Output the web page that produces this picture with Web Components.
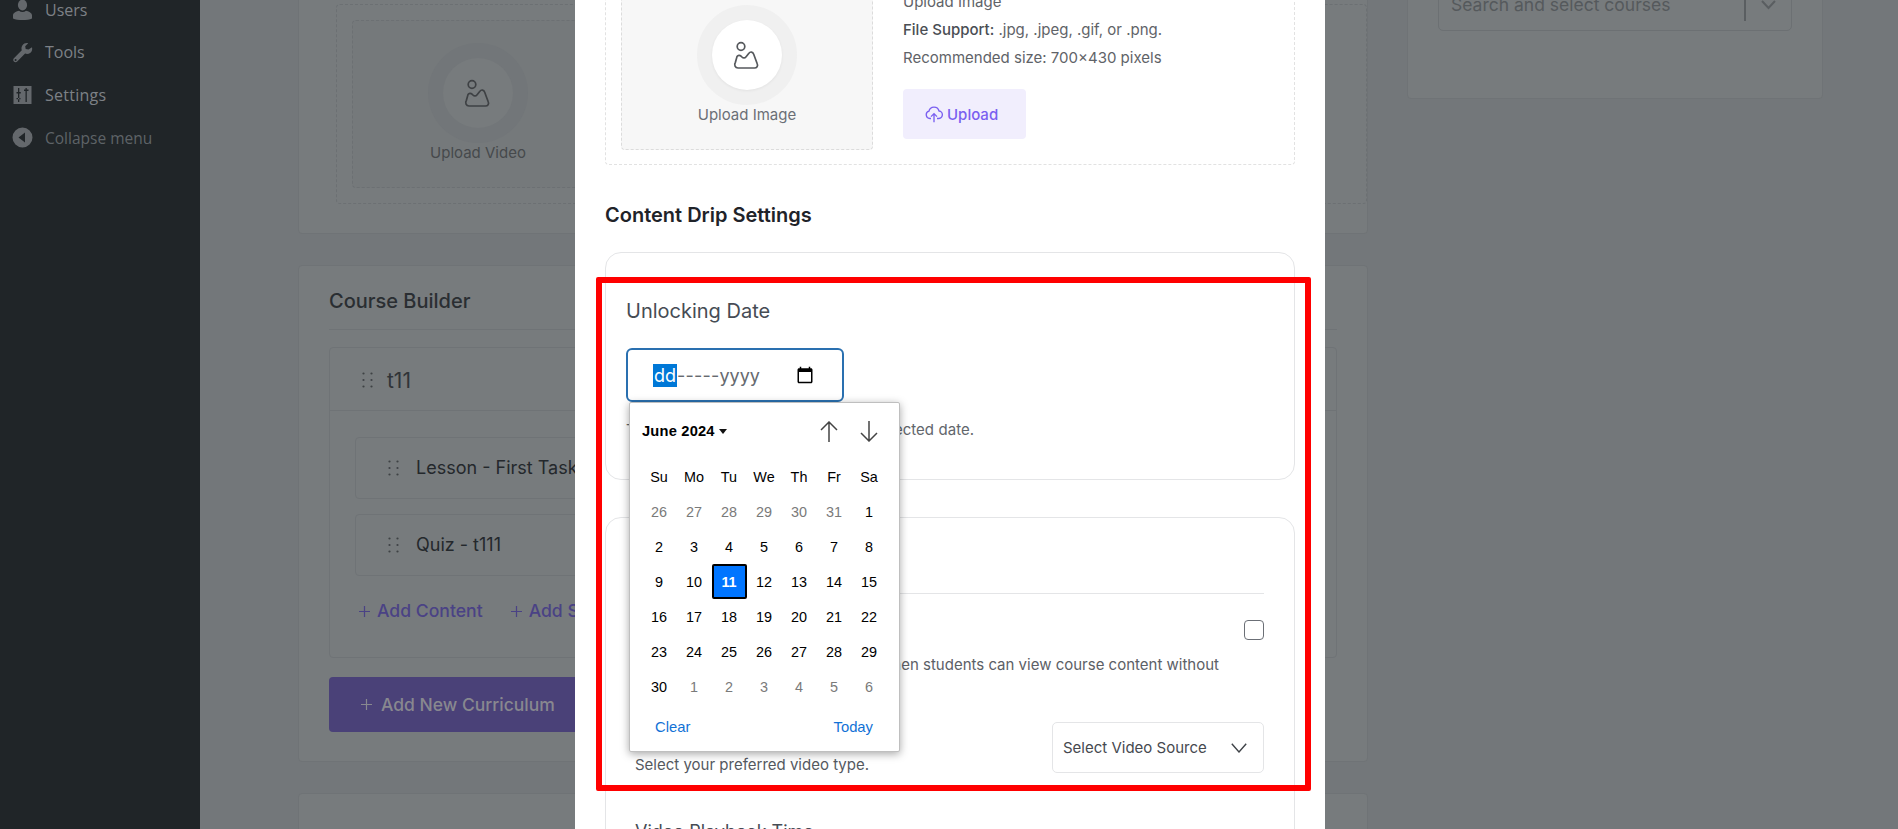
<!DOCTYPE html>
<html lang="en">
<head>
<meta charset="utf-8">
<title>Content Drip Settings</title>
<style>
  html, body { margin: 0; height: 829px; overflow: hidden; background: #73777a; }
  body { font-family: Inter, "Liberation Sans", sans-serif; }
</style>
</head>
<body>
<lms-page></lms-page>

<script>
//small helper so every element gets an open shadow root from a template
function makeTemplate(html) {
  var t = document.createElement("template");
  t.innerHTML = html;
  return t;
}

var GRIP = `<svg width="11" height="16" viewBox="0 0 11 16" fill="currentColor" aria-hidden="true">
  <circle cx="1.5" cy="1.5" r="1.1"/><circle cx="9.5" cy="1.5" r="1.1"/>
  <circle cx="1.5" cy="8" r="1.1"/><circle cx="9.5" cy="8" r="1.1"/>
  <circle cx="1.5" cy="14.5" r="1.1"/><circle cx="9.5" cy="14.5" r="1.1"/></svg>`;

var PLUS = `<svg width="11" height="11" viewBox="0 0 11 11" stroke="currentColor" stroke-width="1.2" fill="none" aria-hidden="true"><path d="M5.5 0v11M0 5.5h11"/></svg>`;

//-------- admin sidebar
var template_menu = makeTemplate(`
<style>
  :host { display: block; width: 200px; height: 829px; background: #202528; overflow: hidden; flex: none; font-family: "Open Sans", "Liberation Sans", sans-serif; }
  .list { margin-top: -11.500px; display: flex; flex-direction: column; }
  .item { height: 42.500px; display: flex; align-items: center; padding-left: 12px; gap: 12px; color: #7d8186; font-size: 16px; }
  .item svg { width: 21px; height: 21px; flex: none; fill: #64686c; }
  .item.collapse { color: #5e6367; font-size: 15.500px; margin-top: .5px; }
</style>
<div class="list">
  <div class="item"><svg viewBox="0 0 21 21"><ellipse cx="10.5" cy="6" rx="4.6" ry="5.4"/><path d="M1 19.5v-3.2c0-2.6 3.6-4 6-4.6 2 1.7 5 1.7 7 0 2.4.6 6 2 6 4.6v3.2c-2 1-5.800 1.500-9.500 1.500S3 20.500 1 19.500z"/></svg><span>Users</span></div>
  <div class="item"><svg viewBox="0 0 21 21"><path d="M20 5.200c.6 2.300-.1 4.500-1.900 5.800-1.500 1.100-3.400 1.300-5 .6L5.200 19.600c-.9.900-2.400.9-3.300 0s-.9-2.400 0-3.300l7.900-8c-.6-1.700-.4-3.600.7-5C11.800 1.400 14 .6 16.200 1.200l-3 3.100.5 2.800 2.800.5 3.500-2.400zM3.600 16.900a1 1 0 1 0 0 2 1 1 0 0 0 0-2z"/></svg><span>Tools</span></div>
  <div class="item"><svg viewBox="0 0 21 21"><path fill-rule="evenodd" d="M1.500 2h18v18h-18zM6 4v4H4.500v1.500H6V18h1.300V9.500h1.500V8H7.300V4zm7.500 0v1.500H12V7h1.500v11h1.300V7h1.700V5.500h-1.700V4zM4.500 14h4v1.300h-4z"/></svg><span style="letter-spacing:.25px">Settings</span></div>
  <div class="item collapse"><svg viewBox="0 0 21 21"><path fill-rule="evenodd" d="M10.500.5a10 10 0 1 1 0 20 10 10 0 0 1 0-20zM13 5.500l-6.500 5 6.500 5z"/></svg><span>Collapse menu</span></div>
</div>
`);

class LmsMenu extends HTMLElement {
  constructor() {
    super();
    this.attachShadow({ mode: "open" });
  }
  connectedCallback() {
    this.shadowRoot.appendChild(template_menu.content.cloneNode(true));
  }
}
customElements.define("lms-menu", LmsMenu);

//-------- dashed drop zone with the round picture icon (dimmed behind the modal, white inside it)
var template_drop = makeTemplate(`
<style>
  :host { display: block; flex: none; width: 252px; height: 168px; box-sizing: border-box; border: 1px dashed var(--drop-line, #dcdcdc); border-radius: 4px; background: var(--drop-bg, #f7f7f7); padding-top: 22px; text-align: center; font-size: 15px; line-height: 20px; color: var(--drop-text, #6b6f76); }
  .ring { width: 100px; height: 100px; margin: 0 auto; border-radius: 50%; background: var(--drop-ring, #f0f0f0); display: flex; align-items: center; justify-content: center; }
  .disc { width: 70px; height: 70px; border-radius: 50%; background: var(--drop-disc, #fff); box-shadow: var(--drop-shadow, 0 1px 3px rgba(0,0,0,.06)); display: flex; align-items: center; justify-content: center; color: var(--drop-icon, #55585c); }
</style>
<div class="ring"><div class="disc">
  <svg width="28" height="28" viewBox="0 0 28 28" fill="none" stroke="currentColor" stroke-width="1.7" aria-hidden="true"><circle cx="8" cy="5.500" r="3.800"/><path d="M5 27h16.500c2.400 0 3.600-2 2.800-4L20.700 13.200c-.9-2.600-3.400-2.900-5-.8l-2.600 3.300c-1.300 1.600-2.900 1.600-4.200.3l-.9-.9c-1.200-1.200-3-1-4 .4L2.400 21.300C.8 24 2.200 27 5 27z"/></svg>
</div></div>
<slot></slot>
`);

class UploadDrop extends HTMLElement {
  constructor() {
    super();
    this.attachShadow({ mode: "open" });
  }
  connectedCallback() {
    this.shadowRoot.appendChild(template_drop.content.cloneNode(true));
  }
}
customElements.define("upload-drop", UploadDrop);

//-------- plain rounded card of the dimmed page
var template_card = makeTemplate(`
<style>
  :host { display: block; box-sizing: border-box; background: #777b7d; border: 1px solid #6f7376; border-radius: 4px; }
</style>
<slot></slot>
`);

class PageCard extends HTMLElement {
  constructor() {
    super();
    this.attachShadow({ mode: "open" });
  }
  connectedCallback() {
    this.shadowRoot.appendChild(template_card.content.cloneNode(true));
  }
}
customElements.define("page-card", PageCard);

//-------- curriculum topic with its lessons, left behind the modal
var template_builder = makeTemplate(`
<style>
  :host { display: block; color: #24282c; }
  h2 { margin: 0; padding-top: 22px; height: 41px; line-height: 26px; font-size: 20px; font-weight: 500; box-sizing: content-box; border-bottom: 1px solid #6f7376; color: #2a2e32; }
  .panel { margin-top: 17px; height: 311px; box-sizing: border-box; border: 1px solid #6f7376; border-radius: 4px; }
  .topic { height: 63px; box-sizing: border-box; border-bottom: 1px solid #6f7376; display: flex; align-items: center; gap: 14px; padding: 2px 0 0 32px; font-size: 21px; color: #303438; }
  .topic svg, .row svg { color: #3f4245; flex: none; }
  .rows { padding: 26px 25px 0 25px; display: flex; flex-direction: column; gap: 15px; }
  .row { height: 62px; box-sizing: border-box; border: 1px solid #6f7376; border-radius: 4px; display: flex; align-items: center; gap: 17px; padding: 0 0 1px 32px; font-size: 18px; white-space: nowrap; }
  .adds { display: flex; gap: 28px; margin: 23px 0 0 29px; color: #4a4285; font-size: 17.600px; line-height: 24px; font-weight: 500; white-space: nowrap; }
  .adds span { display: inline-flex; align-items: center; gap: 7px; }
  .new { margin-top: 19px; height: 55px; width: 420px; border-radius: 4px; background: #4a4178; color: #88888f; display: flex; align-items: center; gap: 9px; padding-left: 32px; box-sizing: border-box; font-size: 17.500px; font-weight: 500; }
</style>
<h2>Course Builder</h2>
<div class="panel">
  <div class="topic">${GRIP}<span>t11</span></div>
  <div class="rows">
    <div class="row">${GRIP}<span>Lesson - First Task</span></div>
    <div class="row">${GRIP}<span>Quiz - t111</span></div>
  </div>
  <div class="adds"><span>${PLUS}Add Content</span><span>${PLUS}Add Section</span></div>
</div>
<div class="new">${PLUS}<span>Add New Curriculum</span></div>
`);

class CourseBuilder extends HTMLElement {
  constructor() {
    super();
    this.attachShadow({ mode: "open" });
  }
  connectedCallback() {
    this.shadowRoot.appendChild(template_builder.content.cloneNode(true));
  }
}
customElements.define("course-builder", CourseBuilder);

//-------- open date input and its calendar popup
var template_date = makeTemplate(`
<style>
  :host { display: block; position: relative; width: 218px; height: 54px; }
  .field { height: 54px; box-sizing: border-box; border: 2px solid #2a70b0; border-radius: 6px; background: #fff; display: flex; align-items: center; padding-left: 25px; font-size: 18px; color: #666a6f; }
  .sel { background: #0078d7; color: #fff; width: 24px; height: 23px; line-height: 23px; text-align: center; }
  .dash { letter-spacing: .2px; }
  .field svg { margin-left: auto; margin-right: 28px; }
  .pop { position: absolute; left: 3px; top: 54px; z-index: 3; width: 271px; height: 350px; box-sizing: border-box; background: #fff; border: 1px solid #bfbfbf; border-radius: 2px; box-shadow: 0 2px 8px rgba(0,0,0,.35); font-family: "Liberation Sans", Arial, sans-serif; font-size: 14.400px; color: #000; }
  .head { height: 56px; display: flex; align-items: center; padding: 0 21px 0 12px; }
  .month { font-weight: 700; font-size: 14.670px; letter-spacing: .2px; }
  .caret { width: 0; height: 0; margin-left: 4px; border: 4.500px solid transparent; border-top: 5px solid #111; border-bottom: 0; }
  .arrows { margin-left: auto; display: flex; gap: 22px; color: #444; }
  .grid { margin-left: 11.500px; display: grid; grid-template-columns: repeat(7, 35px); grid-auto-rows: 35px; }
  .grid span { display: flex; align-items: center; justify-content: center; box-sizing: border-box; }
  .grid .off { color: #7a7a7a; }
  .grid .now { background: #0075ff; border: 2px solid #000; border-radius: 2px; color: #fff; font-weight: 700; }
  .foot { height: 45px; display: flex; align-items: center; justify-content: space-between; padding: 0 26px 0 25px; color: #1272d6; font-size: 14.800px; }
</style>
<div class="field">
  <span class="sel">dd</span><span class="dash">-----</span><span>yyyy</span>
  <svg width="18" height="18" viewBox="0 0 24 24" fill="#000" aria-hidden="true"><path d="M20 3h-1V1h-2v2H7V1H5v2H4c-1.100 0-2 .9-2 2v16c0 1.100.9 2 2 2h16c1.100 0 2-.9 2-2V5c0-1.100-.9-2-2-2zm0 18H4V8h16v13z"/></svg>
</div>
<div class="pop">
  <div class="head">
    <span class="month">June 2024</span><span class="caret"></span>
    <span class="arrows">
      <svg width="18" height="21" viewBox="0 0 18 21" fill="none" stroke="currentColor" stroke-width="1.500" aria-hidden="true"><path d="M9 21V1M1 9l8-8 8 8"/></svg>
      <svg width="18" height="21" viewBox="0 0 18 21" fill="none" stroke="currentColor" stroke-width="1.500" aria-hidden="true"><path d="M9 0v20M1 12l8 8 8-8"/></svg>
    </span>
  </div>
  <div class="grid"></div>
  <div class="foot"><span>Clear</span><span>Today</span></div>
</div>
`);

class DatePicker extends HTMLElement {
  constructor() {
    super();
    this.attachShadow({ mode: "open" });
  }
  connectedCallback() {
    this.shadowRoot.appendChild(template_date.content.cloneNode(true));
    var grid = this.shadowRoot.querySelector(".grid");
    var cells = ["Su", "Mo", "Tu", "We", "Th", "Fr", "Sa"].map(function (d) { return [d, ""]; });
    [26, 27, 28, 29, 30, 31].forEach(function (d) { cells.push([d, "off"]); });
    for (var d = 1; d <= 30; d++) cells.push([d, d == 11 ? "now" : ""]);
    for (var n = 1; n <= 6; n++) cells.push([n, "off"]);
    cells.forEach(function (c) {
      var s = document.createElement("span");
      s.textContent = c[0];
      if (c[1]) s.className = c[1];
      grid.appendChild(s);
    });
  }
}
customElements.define("date-picker", DatePicker);

//-------- the white modal
var template_modal = makeTemplate(`
<style>
  :host { display: block; position: absolute; left: 575px; top: 0; width: 750px; height: 829px; overflow: hidden; background: #fff; color: #3f444b; }
  .wrap { padding: 0 30px; box-sizing: border-box; }
  .media { margin-top: -33px; height: 198px; box-sizing: border-box; border: 1px dashed #e2e2e2; border-radius: 4px; padding: 14px 15px; display: flex; gap: 30px; }
  .info { padding-top: 6px; font-size: 15px; color: #5f6368; }
  .info p { margin: 0; height: 28px; line-height: 28px; }
  .info b { font-weight: 500; color: #4a4e54; }
  .btn { margin-top: 17px; width: 123px; height: 50px; border-radius: 4px; background: #f1eefd; color: #7a5ff0; display: flex; align-items: center; gap: 4px; padding-left: 22px; box-sizing: border-box; font-size: 15px; font-weight: 500; }
  h3 { margin: 38px 0 0; font-size: 20px; line-height: 24px; font-weight: 600; color: #1f2329; }
  .box { box-sizing: border-box; border: 1px solid #e4e5e7; border-radius: 16px; background: #fff; }
  .one { margin-top: 25px; height: 228px; padding: 46px 20px 0; }
  h4 { margin: 0; font-size: 20px; line-height: 24px; font-weight: 400; color: #464c54; }
  .one date-picker { margin-top: 25px; }
  .help { margin: 17px 0 0; font-size: 15px; line-height: 22px; color: #62666c; white-space: nowrap; }
  .one .help { word-spacing: .4px; }
  .two { margin-top: 37px; height: 420px; padding: 0 30px 0 29px; }
  .tabs { height: 76px; box-sizing: border-box; border-bottom: 1px solid #e4e5e7; }
  .line { display: flex; justify-content: flex-end; margin-top: 26px; }
  .check { width: 20px; height: 20px; box-sizing: border-box; border: 1px solid #6b6f76; border-radius: 4px; }
  .two .help { margin: 14px 45px 0 auto; width: max-content; color: #5c6066; height: 44px; }
  .source { display: flex; justify-content: space-between; margin-top: 24px; height: 54px; }
  .source .help { margin: 32px 0 0; width: auto; height: 22px; color: #55595f; }
  .select { width: 212px; height: 51px; box-sizing: border-box; border: 1px solid #e4e5e7; border-radius: 5px; display: flex; align-items: center; justify-content: space-between; padding: 0 16px 0 10px; font-size: 15px; color: #46494f; }
  h5 { margin: 44px 0 0; font-size: 18px; line-height: 24px; font-weight: 400; color: #464c54; }
</style>
<div class="wrap">
  <div class="media">
    <upload-drop>Upload Image</upload-drop>
    <div class="info">
      <p>Upload Image</p>
      <p><b>File Support:</b> .jpg, .jpeg, .gif, or .png.</p>
      <p>Recommended size: 700×430 pixels</p>
      <div class="btn">
        <svg width="18" height="18" viewBox="0 0 24 24" fill="none" stroke="currentColor" stroke-width="1.800" aria-hidden="true"><path d="M8 18H6.500a5 5 0 0 1-1.200-9.800 6.900 6.900 0 0 1 13.400-.2A5 5 0 0 1 17.500 18H16M12 23V12M8 15.500l4-4 4 4"/></svg>
        <span>Upload</span>
      </div>
    </div>
  </div>
  <h3>Content Drip Settings</h3>
  <div class="box one">
    <h4>Unlocking Date</h4>
    <date-picker></date-picker>
    <p class="help">This lesson will be available at the selected date.</p>
  </div>
  <div class="box two">
    <div class="tabs"></div>
    <div class="line"><span class="check"></span></div>
    <p class="help">Then students can view course content without</p>
    <div class="source">
      <p class="help">Select your preferred video type.</p>
      <div class="select"><span>Select Video Source</span>
        <svg width="16" height="10" viewBox="0 0 16 10" fill="none" stroke="#3f4348" stroke-width="1.400" aria-hidden="true"><path d="M.8.800 8 9 15.200.800"/></svg>
      </div>
    </div>
    <h5>Video Playback Time</h5>
  </div>
</div>
`);

class DripModal extends HTMLElement {
  constructor() {
    super();
    this.attachShadow({ mode: "open" });
  }
  connectedCallback() {
    this.shadowRoot.appendChild(template_modal.content.cloneNode(true));
  }
}
customElements.define("drip-modal", DripModal);

//-------- red annotation frame drawn over the screenshot
var template_frame = makeTemplate(`
<style>
  :host { display: block; position: absolute; left: 596px; top: 277px; width: 715px; height: 514px; box-sizing: border-box; border: 6px solid #ff0000; border-radius: 2px; z-index: 5; pointer-events: none; }
</style>
`);

class MarkFrame extends HTMLElement {
  constructor() {
    super();
    this.attachShadow({ mode: "open" });
  }
  connectedCallback() {
    this.shadowRoot.appendChild(template_frame.content.cloneNode(true));
  }
}
customElements.define("mark-frame", MarkFrame);

//-------- whole page
var template_page = makeTemplate(`
<style>
  :host { display: flex; position: relative; width: 1898px; height: 829px; overflow: hidden; background: #73777a; }
  .columns { flex: 1; display: flex; align-items: flex-start; margin-top: -100px; padding-left: 98px; gap: 39px; }
  .left { width: 1070px; flex: none; display: flex; flex-direction: column; gap: 31px; }
  .video { height: 334px; padding: 103px 0 0 37px; }
  .dashed { height: 200px; box-sizing: border-box; border: 1px dashed #6c7073; border-radius: 4px; padding: 15px; --drop-line: #6c7073; --drop-bg: #75797b; --drop-ring: #727679; --drop-disc: #777b7d; --drop-icon: #3e4144; --drop-text: #46494c; --drop-shadow: none; }
  .course { height: 497px; padding: 0 30px 0 30px; }
  .more { height: 100px; }
  .right { width: 416px; flex: none; }
  .side { padding: 77px 30px 67px; }
  .search { height: 53px; box-sizing: border-box; border: 1px solid #6c7073; border-radius: 5px; display: flex; align-items: center; padding-left: 12px; font-size: 17.500px; color: #55595c; white-space: nowrap; }
  .search i { width: 2px; margin: 0 0 0 auto; height: 42px; background: #5a5e61; align-self: flex-start; }
  .search svg { margin: 0 15px; }
</style>
<lms-menu></lms-menu>
<div class="columns">
  <div class="left">
    <page-card class="video"><div class="dashed"><upload-drop>Upload Video</upload-drop></div></page-card>
    <page-card class="course"><course-builder></course-builder></page-card>
    <page-card class="more"></page-card>
  </div>
  <div class="right">
    <page-card class="side">
      <div class="search"><span>Search and select courses</span><i></i>
        <svg width="15" height="10" viewBox="0 0 15 10" fill="none" stroke="#5a5e61" stroke-width="2" aria-hidden="true"><path d="M1 1l6.500 7L14 1"/></svg>
      </div>
    </page-card>
  </div>
</div>
<drip-modal></drip-modal>
<mark-frame></mark-frame>
`);

class LmsPage extends HTMLElement {
  constructor() {
    super();
    this.attachShadow({ mode: "open" });
  }
  connectedCallback() {
    this.shadowRoot.appendChild(template_page.content.cloneNode(true));
  }
}
customElements.define("lms-page", LmsPage);
</script>
</body>
</html>
